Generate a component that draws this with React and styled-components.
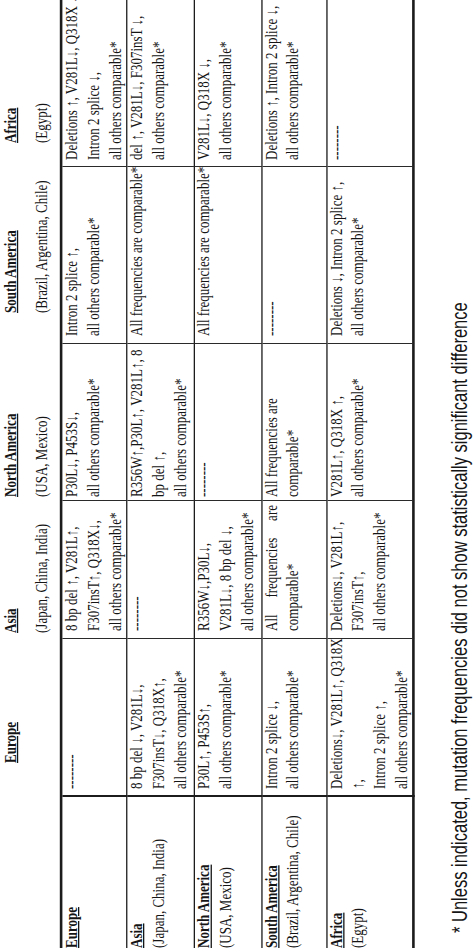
import React from "react";
import styled, { createGlobalStyle } from "styled-components";

// the picture is the table turned a quarter turn and stretched across the rows
const S = 1.3;
const PITCH = 22 / S;

const GlobalStyle = createGlobalStyle`
  html, body {
    margin: 0;
    padding: 0;
    background: #ffffff;
  }
`;

const Frame = styled.div`
  width: 474px;
  height: 948px;
  overflow: hidden;
  background: #ffffff;
`;

const Sheet = styled.div`
  width: 948px;
  height: ${474 / S}px;
  transform-origin: 0 0;
  transform: translateY(948px) rotate(-90deg) scaleY(${S});
  font-family: "Liberation Serif", "Times New Roman", serif;
  font-size: 13px;
  line-height: ${PITCH}px;
  color: #151515;
`;

const Grid = styled.div`
  display: grid;
  grid-template-columns: 159px 157px 138px 157px 177px 178px;
  grid-template-rows: ${[62, 66, 67, 67, 65, 88].map((h) => `${h / S}px`).join(" ")};
  margin-left: -6px;
  width: max-content;
`;

const HeadCell = styled.div`
  padding-left: ${(p) => p.$indent}px;
  border-bottom: 2px solid #1c1c1c;
  white-space: nowrap;
`;

const RowHead = styled.div`
  padding-left: 6px;
  border-right: 2px solid #1c1c1c;
  border-bottom: ${(p) => (p.$last ? 2 : 1)}px solid #1c1c1c;
  white-space: nowrap;
`;

const Cell = styled.div`
  padding-left: ${(p) => p.$indent}px;
  padding-right: 4px;
  border-right: 1px solid #2a2a2a;
  border-bottom: ${(p) => (p.$last ? 2 : 1)}px solid #1c1c1c;
`;

const Body = styled.div`
  margin-top: -1px;
`;

const Name = styled.div`
  font-weight: bold;
  text-decoration: underline;
  margin-top: ${(p) => (p.$head ? 0 : -1)}px;
`;

const Paren = styled.div`
  margin-top: ${(p) => (p.$head ? 7 : 0)}px;
`;

const Line = styled.div`
  white-space: nowrap;
`;

const Justified = styled.div`
  display: flex;
  justify-content: space-between;
`;

const Note = styled.div`
  margin-top: 25px;
  margin-left: 15px;
  font-family: "Liberation Sans", Arial, sans-serif;
  font-size: 16.5px;
  line-height: 19px;
  white-space: nowrap;
  color: #151515;
`;

const DASH = "--------";

const headers = [
  { name: "Europe", indent: 32 },
  { name: "Asia", sub: "(Japan, China, India)", indent: 5 },
  { name: "North America", sub: "(USA, Mexico)", indent: 3 },
  { name: "South America", sub: "(Brazil, Argentina, Chile)", indent: 30 },
  { name: "Africa", sub: "(Egypt)", indent: 23 },
];

const indents = [6, 7, 3, 7, 6];

const rows = [
  {
    name: "Europe",
    cells: [
      [DASH],
      ["8 bp del \u2191, V281L\u2191,", "F307insT\u2191, Q318X\u2193,", "all others comparable*"],
      ["P30L\u2193, P453S\u2193,", "all others comparable*"],
      ["Intron 2 splice \u2191,", "all others comparable*"],
      ["Deletions \u2191, V281L\u2193, Q318X \u2193,", "Intron 2 splice \u2193,", "all others comparable*"],
    ],
  },
  {
    name: "Asia",
    sub: "(Japan, China, India)",
    cells: [
      ["8 bp del \u2193, V281L\u2193,", "F307insT\u2193, Q318X\u2191,", "all others comparable*"],
      [DASH],
      ["R356W\u2191,P30L\u2191, V281L\u2191, 8", "bp del \u2191,", "all others comparable*"],
      ["All frequencies are comparable*"],
      ["del \u2191, V281L\u2193, F307insT \u2193,", "all others comparable*"],
    ],
  },
  {
    name: "North America",
    sub: "(USA, Mexico)",
    cells: [
      ["P30L\u2191, P453S\u2191,", "all others comparable*"],
      ["R356W\u2193,P30L\u2193,", "V281L\u2193, 8 bp del \u2193,", "all others comparable*"],
      [DASH],
      ["All frequencies are comparable*"],
      ["V281L\u2193, Q318X \u2193,", "all others comparable*"],
    ],
  },
  {
    name: "South America",
    sub: "(Brazil, Argentina, Chile)",
    cells: [
      ["Intron 2 splice \u2193,", "all others comparable*"],
      [["All", "frequencies", "are"], "comparable*"],
      ["All frequencies are", "comparable*"],
      [DASH],
      ["Deletions \u2191, Intron 2 splice \u2193,", "all others comparable*"],
    ],
  },
  {
    name: "Africa",
    sub: "(Egypt)",
    cells: [
      ["Deletions\u2193, V281L\u2191, Q318X", "\u2191,", "Intron 2 splice \u2191,", "all others comparable*"],
      ["Deletions\u2193, V281L\u2191,", "F307insT\u2191,", "all others comparable*"],
      ["V281L\u2191, Q318X \u2191,", "all others comparable*"],
      ["Deletions \u2193, Intron 2 splice \u2191,", "all others comparable*"],
      [DASH],
    ],
  },
];

const CellLines = ({ lines }) => (
  <Body>
    {lines.map((l, i) =>
      Array.isArray(l) ? (
        <Justified key={i}>
          {l.map((w) => (
            <span key={w}>{w}</span>
          ))}
        </Justified>
      ) : (
        <Line key={i}>{l}</Line>
      )
    )}
  </Body>
);

export default function App() {
  return (
    <>
      <GlobalStyle />
      <Frame>
        <Sheet>
          <Grid>
            <HeadCell $indent={0} />
            {headers.map((h) => (
              <HeadCell key={h.name} $indent={h.indent}>
                <Name $head>{h.name}</Name>
                {h.sub && <Paren $head>{h.sub}</Paren>}
              </HeadCell>
            ))}
            {rows.map((r, ri) => {
              const last = ri === rows.length - 1;
              return (
                <React.Fragment key={r.name}>
                  <RowHead $last={last}>
                    <Name>{r.name}</Name>
                    {r.sub && <Paren>{r.sub}</Paren>}
                  </RowHead>
                  {r.cells.map((c, ci) => (
                    <Cell key={ci} $indent={indents[ci]} $last={last}>
                      <CellLines lines={c} />
                    </Cell>
                  ))}
                </React.Fragment>
              );
            })}
          </Grid>
          <Note>
            * Unless indicated, mutation frequencies did not show statistically significant difference
          </Note>
        </Sheet>
      </Frame>
    </>
  );
}
